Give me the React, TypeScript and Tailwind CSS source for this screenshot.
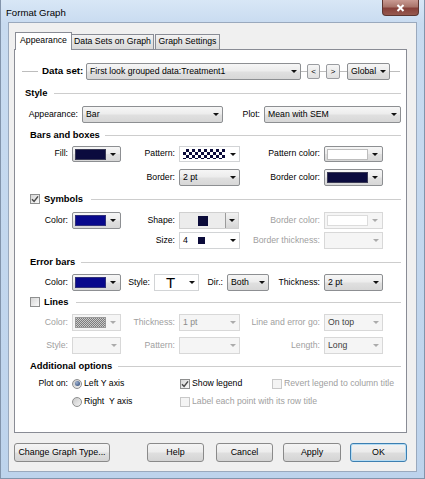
import React from 'react'

// Win7 "Format Graph" dialog, scaled down like the screenshot

const SKIN = {
  gray: 'rounded-[2px] border-[#8d8f92] bg-[image:linear-gradient(#f6f6f6,#ececec_48%,#e0e0e0_52%,#d7d7d7)] text-black',
  white: 'border-[#d2d4d6] bg-white text-black',
  off: 'border-[#d8d8d8] bg-[#f5f5f5] text-[#8e8e8e]',
}

type Skin = keyof typeof SKIN

function Arrow({ dim = false }: { dim?: boolean }) {
  return (
    <span
      className={
        dim
          ? 'block h-0 w-0 border-x-[3px] border-t-[3px] border-x-transparent border-t-[#ababab]'
          : 'block h-0 w-0 border-x-[3px] border-t-[3px] border-x-transparent border-t-[#111]'
      }
    />
  )
}

function Combo({
  w,
  skin = 'gray',
  children,
}: {
  w: string
  skin?: Skin
  children?: React.ReactNode
}) {
  return (
    <div className={`flex h-full shrink-0 items-center border ${SKIN[skin]} ${w}`}>
      <div className="flex min-w-0 flex-1 items-center overflow-hidden whitespace-nowrap pl-[3px]">
        {children}
      </div>
      <div className="flex w-[12px] shrink-0 justify-center">
        <Arrow dim={skin === 'off'} />
      </div>
    </div>
  )
}

function Swatch({ w, fill, off = false }: { w: string; fill: string; off?: boolean }) {
  return (
    <div className={`flex h-full shrink-0 items-center border pl-[2px] ${off ? SKIN.off : SKIN.gray} ${w}`}>
      <span className={`h-[11px] flex-1 border ${fill}`} />
      <div className="flex w-[14px] shrink-0 justify-center">
        <Arrow dim={off} />
      </div>
    </div>
  )
}

function L({ w, children, off = false }: { w: string; children?: React.ReactNode; off?: boolean }) {
  return (
    <span className={`shrink-0 whitespace-nowrap pr-[4px] text-right ${w} ${off ? 'text-[#a0a0a0]' : ''}`}>
      {children}
    </span>
  )
}

function Check({ on = false, off = false }: { on?: boolean; off?: boolean }) {
  return (
    <span
      className={`flex h-[10px] w-[10px] shrink-0 items-center justify-center border ${
        off
          ? 'border-[#c8c8c8] bg-[#f4f4f4]'
          : 'border-[#8e8f8f] bg-[image:linear-gradient(135deg,#d6d6d6,#fafafa)]'
      }`}>
      {on && (
        <svg width="8" height="8" viewBox="0 0 8 8">
          <path d="M1 4.2 L3.1 6.4 L7 1.4" fill="none" stroke="#4a4a4a" strokeWidth="1.5" />
        </svg>
      )}
    </span>
  )
}

function Radio({ on = false }: { on?: boolean }) {
  return (
    <span className="flex h-[10px] w-[10px] shrink-0 items-center justify-center rounded-full border border-[#8e8f8f] bg-[image:linear-gradient(135deg,#c9c9c9,#f3f3f3)]">
      {on && (
        <span className="h-[5px] w-[5px] rounded-full bg-[image:radial-gradient(circle_at_35%_35%,#9db0d0,#23406e)]" />
      )}
    </span>
  )
}

function Head({
  className = '',
  box,
  children,
  gap = 'ml-[6px]',
}: {
  className?: string
  box?: React.ReactNode
  children: React.ReactNode
  gap?: string
}) {
  return (
    <div className={`flex h-[12px] items-center pr-[5px] ${className}`}>
      {box}
      <span className="whitespace-nowrap text-[9.4px] font-bold">{children}</span>
      <span className={`h-px flex-1 bg-[#cdcdcd] ${gap}`} />
    </div>
  )
}

function Btn({ w, children, def = false, className = '' }: { w: string; children: React.ReactNode; def?: boolean; className?: string }) {
  return (
    <button
      className={`flex h-[19px] shrink-0 items-center justify-center rounded-[3px] border text-[8.9px] ${w} ${className} ${
        def
          ? 'border-[#3c7fb1] bg-[image:linear-gradient(#f2f2f2,#ebebeb_48%,#dddddd_52%,#d3d3d3)] shadow-[inset_0_0_0_1px_#b6dcf3]'
          : 'border-[#8a8a8a] bg-[image:linear-gradient(#f4f4f4,#ececec_48%,#dfdfdf_52%,#d4d4d4)]'
      }`}>
      {children}
    </button>
  )
}

function Nudge({ w, children }: { w: string; children: React.ReactNode }) {
  return (
    <span
      className={`flex h-[15px] shrink-0 items-center justify-center rounded-[2px] border border-[#9a9ca0] bg-[image:linear-gradient(#f6f6f6,#e0e0e0)] text-[8px] leading-none ${w}`}>
      {children}
    </span>
  )
}

const NAVY = 'border-[#3a3a55] bg-[#0b0b3e]'
const BLUE = 'border-[#30307a] bg-[#08088c]'
const WHITE = 'border-[#bdbdbd] bg-white'

export default function App() {
  return (
    <div className="h-[479px] w-[425px] overflow-hidden bg-white font-['Liberation_Sans',Arial,sans-serif] text-black">
      <div className="flex h-full w-full flex-col border-x border-b border-[#8294ab] bg-[image:linear-gradient(#d8e7f6,#c8dbf0_24px,#bdd3ec)]">
        {/* title bar */}
        <div className="flex h-[22px] shrink-0 items-start">
          <span className="ml-[5px] mt-[8px] text-[9.6px] leading-none">Format Graph</span>
          <span className="ml-auto mr-[5px] flex h-[16px] w-[37px] items-center justify-center rounded-b-[4px] border border-t-0 border-[#5c3631] bg-[image:linear-gradient(#c99a92,#a9756b_45%,#864039_55%,#96594f)]">
            <svg width="9" height="8" viewBox="0 0 9 8">
              <path d="M1.5 1 L7.5 7 M7.5 1 L1.5 7" stroke="#fff" strokeWidth="2" />
            </svg>
          </span>
        </div>

        {/* client area */}
        <div className="mx-[7px] flex h-[450px] flex-col border border-[#9aa9bd] bg-[#f0f0f0] pl-[5px] pt-[9px]">
          {/* tabs */}
          <div className="flex h-[17px] items-end text-[8.7px]">
            <span className="relative z-10 -mb-px ml-px flex h-[18px] w-[57px] items-center justify-center border-x border-t border-[#898c95] bg-white pb-[2px]">
              Appearance
            </span>
            <span className="flex h-[15px] w-[82px] items-center justify-center border-r border-t border-[#898c95] bg-[image:linear-gradient(#f3f3f3,#e4e4e4_50%,#d9d9d9)]">
              Data Sets on Graph
            </span>
            <span className="ml-px flex h-[15px] w-[65px] items-center justify-center border-x border-t border-[#898c95] bg-[image:linear-gradient(#f3f3f3,#e4e4e4_50%,#d9d9d9)]">
              Graph Settings
            </span>
          </div>

          {/* panel */}
          <div className="flex h-[384px] w-[393px] flex-col border border-[#898c95] bg-white text-[8.7px]">
            {/* data set */}
            <div className="mt-[13px] flex h-[17px] items-center">
              <span className="ml-[7px] h-px w-[16px] shrink-0 bg-[#bdbdbd]" />
              <span className="w-[48px] shrink-0 whitespace-nowrap pl-[4px] text-[9.8px] font-bold">Data set:</span>
              <Combo w="w-[215px]">First look grouped data:Treatment1</Combo>
              <span className="h-px w-[6px] shrink-0 bg-[#bdbdbd]" />
              <Nudge w="w-[13px]">&lt;</Nudge>
              <span className="h-px w-[6px] shrink-0 bg-[#bdbdbd]" />
              <Nudge w="w-[14px]">&gt;</Nudge>
              <span className="h-px w-[7px] shrink-0 bg-[#bdbdbd]" />
              <Combo w="w-[43px]">Global</Combo>
              <span className="h-px w-[10px] shrink-0 bg-[#bdbdbd]" />
            </div>

            {/* style */}
            <Head className="mt-[7px] pl-[10px]" gap="ml-[7px]">Style</Head>
            <div className="mt-[7px] flex h-[17px] items-center pr-[5px]">
              <L w="w-[67px]">Appearance:</L>
              <Combo w="w-[141px]">Bar</Combo>
              <L w="w-[41px]">Plot:</L>
              <Combo w="flex-1">Mean with SEM</Combo>
            </div>

            {/* bars and boxes */}
            <Head className="mt-[6px] pl-[15px]" gap="ml-[5px]">Bars and boxes</Head>
            <div className="mt-[5px] flex h-[16px] items-center">
              <L w="w-[57px]">Fill:</L>
              <Swatch w="w-[49px]" fill={NAVY} />
              <L w="w-[58px]">Pattern:</L>
              <Combo w="w-[61px]" skin="white">
                <span className="h-[10px] w-[42px] bg-[image:repeating-conic-gradient(#0a0a3a_0_25%,#ffffff_0_50%)] bg-[length:6px_6px]" />
              </Combo>
              <L w="w-[84px]">Pattern color:</L>
              <Swatch w="w-[59px]" fill={WHITE} />
            </div>
            <div className="mt-[7px] flex h-[17px] items-center">
              <span className="w-[106px] shrink-0" />
              <L w="w-[58px]">Border:</L>
              <Combo w="w-[61px]">2 pt</Combo>
              <L w="w-[84px]">Border color:</L>
              <Swatch w="w-[59px]" fill={NAVY} />
            </div>

            {/* symbols */}
            <Head
              className="mt-[7px] pl-[15px]"
              gap="ml-[8px]"
              box={
                <span className="mr-[4px]">
                  <Check on />
                </span>
              }>
              Symbols
            </Head>
            <div className="mt-[7px] flex h-[17px] items-center">
              <L w="w-[57px]">Color:</L>
              <Swatch w="w-[49px]" fill={BLUE} />
              <L w="w-[58px]">Shape:</L>
              <div className="flex h-full w-[60px] shrink-0 items-stretch border border-[#d0d0d0] bg-[#ececec]">
                <div className="flex flex-1 items-center justify-center">
                  <span className="h-[10px] w-[10px] bg-[#0b0b3a]" />
                </div>
                <div className="flex w-[13px] items-center justify-center border-l border-[#9a9a9a] bg-[image:linear-gradient(#f2f2f2,#d6d6d6)]">
                  <Arrow />
                </div>
              </div>
              <L w="w-[85px]" off>
                Border color:
              </L>
              <Swatch w="w-[59px]" fill="border-[#dcdcdc] bg-white" off />
            </div>
            <div className="mt-[3px] flex h-[17px] items-center">
              <span className="w-[106px] shrink-0" />
              <L w="w-[58px]">Size:</L>
              <Combo w="w-[61px]" skin="white">
                <span>4</span>
                <span className="ml-[10px] h-[7px] w-[7px] bg-[#0b0b3a]" />
              </Combo>
              <L w="w-[84px]" off>
                Border thickness:
              </L>
              <Combo w="w-[59px]" skin="off" />
            </div>

            {/* error bars */}
            <Head className="mt-[7px] pl-[15px]" gap="ml-[6px]">Error bars</Head>
            <div className="mt-[6px] flex h-[17px] items-center">
              <L w="w-[57px]">Color:</L>
              <Swatch w="w-[49px]" fill={BLUE} />
              <L w="w-[33px]">Style:</L>
              <Combo w="w-[45px]" skin="white">
                <span className="ml-[8px] text-[15px] font-light leading-none">T</span>
              </Combo>
              <L w="w-[28px]">Dir.:</L>
              <Combo w="w-[42px]">Both</Combo>
              <L w="w-[55px]">Thickness:</L>
              <Combo w="w-[59px]">2 pt</Combo>
            </div>

            {/* lines */}
            <Head
              className="mt-[5px] pl-[15px]"
              gap="ml-[7px]"
              box={
                <span className="mr-[4px]">
                  <Check />
                </span>
              }>
              Lines
            </Head>
            <div className="mt-[6px] flex h-[17px] items-center">
              <L w="w-[57px]" off>
                Color:
              </L>
              <Swatch
                w="w-[49px]"
                off
                fill="border-[#9a9a9a] bg-[image:repeating-conic-gradient(#7c7c7c_0_25%,#c9c9c9_0_50%)] bg-[length:2px_2px]"
              />
              <L w="w-[58px]" off>
                Thickness:
              </L>
              <Combo w="w-[61px]" skin="off">
                <span className="text-[#8a8a8a]">1 pt</span>
              </Combo>
              <L w="w-[84px]" off>
                Line and error go:
              </L>
              <Combo w="w-[59px]" skin="off">
                <span className="text-[#3e3e3e]">On top</span>
              </Combo>
            </div>
            <div className="mt-[6px] flex h-[17px] items-center">
              <L w="w-[57px]" off>
                Style:
              </L>
              <Combo w="w-[49px]" skin="off" />
              <L w="w-[58px]" off>
                Pattern:
              </L>
              <Combo w="w-[61px]" skin="off" />
              <L w="w-[84px]" off>
                Length:
              </L>
              <Combo w="w-[59px]" skin="off">
                <span className="text-[#3e3e3e]">Long</span>
              </Combo>
            </div>

            {/* additional options */}
            <Head className="mt-[6px] pl-[15px]" gap="ml-[6px]">Additional options</Head>
            <div className="mt-[5px] flex h-[14px] items-center">
              <L w="w-[57px]">Plot on:</L>
              <span className="flex w-[108px] shrink-0 items-center gap-[2px]">
                <Radio on />
                Left Y axis
              </span>
              <span className="flex w-[92px] shrink-0 items-center gap-[2px]">
                <Check on />
                Show legend
              </span>
              <span className="flex items-center gap-[2px] whitespace-nowrap text-[#a0a0a0]">
                <Check off />
                Revert legend to column title
              </span>
            </div>
            <div className="mt-[4px] flex h-[14px] items-center">
              <span className="w-[57px] shrink-0" />
              <span className="flex w-[108px] shrink-0 items-center gap-[2px] whitespace-pre">
                <Radio />
                {'Right  Y axis'}
              </span>
              <span className="flex items-center gap-[2px] whitespace-nowrap text-[#a0a0a0]">
                <Check off />
                Label each point with its row title
              </span>
            </div>
          </div>

          {/* buttons */}
          <div className="mt-[10px] flex items-center">
            <Btn w="w-[96px]">Change Graph Type...</Btn>
            <Btn w="w-[57px]" className="ml-[37px]">
              Help
            </Btn>
            <Btn w="w-[57px]" className="ml-[12px]">
              Cancel
            </Btn>
            <Btn w="w-[58px]" className="ml-[10px]">
              Apply
            </Btn>
            <Btn w="w-[57px]" className="ml-[9px]" def>
              OK
            </Btn>
          </div>
        </div>
      </div>
    </div>
  )
}
